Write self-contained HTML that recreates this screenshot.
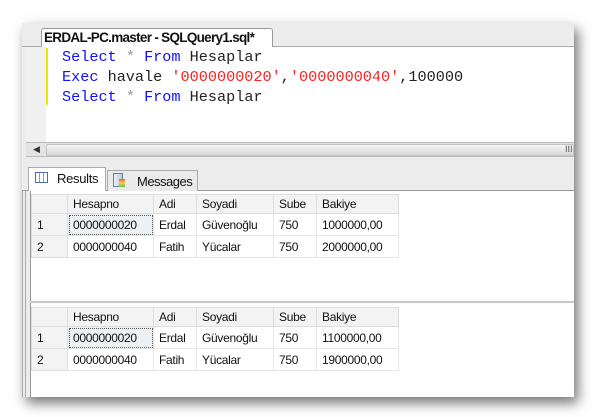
<!DOCTYPE html>
<html><head><meta charset="utf-8"><style>
*{margin:0;padding:0;box-sizing:border-box}
body{width:616px;height:417px;background:#fff;position:relative;overflow:hidden;font-family:"Liberation Sans",sans-serif}
.a{position:absolute;white-space:nowrap}
#win{left:22px;top:23px;width:552px;height:374px;background:#ececec;box-shadow:4px 6px 12px rgba(0,0,0,.55)}
.code{font-family:"Liberation Mono",monospace;font-size:15.2px;color:#222;white-space:pre;line-height:20px}
.k{color:#1010ff}.s{color:#ff2020}.g{color:#999}
table{border-collapse:collapse;font-size:12px;color:#111;letter-spacing:-0.3px}
td{height:22px;padding:0 5px;border:1px solid #e6e6e6;white-space:nowrap;background:#fff}
tr.h td{background:#f3f3f3;height:19px;border-color:#ddd}
td.r{background:#f3f3f3;border-color:#ddd}
td.sel{outline:1px dotted #555;outline-offset:-2px;background:#eef1f4}
</style></head><body>
<div id="win" class="a"></div>
<div class="a" style="left:22px;top:46px;width:552px;height:1px;background:#aaa"></div>
<div class="a" style="left:41px;top:28px;width:232px;height:19px;background:#fff;border:1px solid #999;border-bottom:none;border-radius:3px 3px 0 0;font-size:13.5px;font-weight:bold;padding-left:2px;line-height:18px;letter-spacing:-0.7px;color:#111;overflow:hidden">ERDAL-PC.master - SQLQuery1.sql*</div>
<div class="a" style="left:26px;top:47px;width:548px;height:95px;background:#fff"></div>
<div class="a" style="left:26px;top:47px;width:20px;height:95px;background:#f0f0f0"></div>
<div class="a" style="left:46px;top:48px;width:2px;height:57px;background:#f2e600"></div>
<div class="a code" style="left:62px;top:47px"><span class="k">Select</span> <span class="g">*</span> <span class="k">From</span> Hesaplar
<span class="k">Exec</span> havale <span class="s">'0000000020'</span>,<span class="s">'0000000040'</span>,100000
<span class="k">Select</span> <span class="g">*</span> <span class="k">From</span> Hesaplar</div>
<div class="a" style="left:26px;top:142px;width:548px;height:15px;background:#e4e4e4;border-top:1px solid #bbb;border-bottom:1px solid #bbb"></div>
<div class="a" style="left:46px;top:144px;width:528px;height:12px;background:linear-gradient(#f4f4f4,#d8d8d8);border:1px solid #c4c4c4;border-radius:2px"></div>
<div class="a" style="left:33px;top:144px;font-size:9px;color:#333">&#9664;</div>
<div class="a" style="left:565px;top:144px;font-size:9px;color:#555">III</div>
<div class="a" style="left:22px;top:190px;width:552px;height:1px;background:#999"></div>
<div class="a" style="left:28px;top:167px;width:78px;height:24px;background:#fff;border:1px solid #aaa;border-bottom:none"></div>
<div class="a" style="left:35px;top:172px;width:13px;height:11px;border:1px solid #4a6fa5;background:repeating-linear-gradient(90deg,#fff 0 3px,#7fa0c8 3px 4px),#fff"></div>
<div class="a" style="left:57px;top:171px;font-size:13px;color:#111;letter-spacing:-0.3px">Results</div>
<div class="a" style="left:107px;top:170px;width:91px;height:21px;background:#eaeaea;border:1px solid #aaa;border-bottom:none"></div>
<div class="a" style="left:113px;top:173px;width:10px;height:14px;border:1px solid #6a7fa0;background:linear-gradient(90deg,#e8eef8,#bcd)"></div>
<div class="a" style="left:119px;top:179px;width:6px;height:8px;background:linear-gradient(#f55,#fc4,#5c5)"></div>
<div class="a" style="left:137px;top:174px;font-size:13px;color:#111;letter-spacing:-0.5px">Messages</div>
<div class="a" style="left:30px;top:191px;width:544px;height:110px;background:#fff;border-left:1px solid #999"></div>
<div class="a" style="left:30px;top:301px;width:544px;height:2px;background:#c8c8c8"></div>
<div class="a" style="left:30px;top:303px;width:544px;height:94px;background:#fff;border-left:1px solid #999"></div>
<div class="a" style="left:22px;top:191px;width:1px;height:206px;background:#aaa"></div>
<div class="a" style="left:25px;top:191px;width:1px;height:206px;background:#aaa"></div>
<table class="a" style="left:31px;top:194px">
<tr class="h"><td style="width:36px"></td><td style="width:86px">Hesapno</td><td style="width:43px">Adi</td><td style="width:77px">Soyadi</td><td style="width:43px">Sube</td><td style="width:82px">Bakiye</td></tr>
<tr><td class="r">1</td><td class="sel">0000000020</td><td>Erdal</td><td>Güvenoğlu</td><td>750</td><td>1000000,00</td></tr>
<tr><td class="r">2</td><td>0000000040</td><td>Fatih</td><td>Yücalar</td><td>750</td><td>2000000,00</td></tr>
</table>
<table class="a" style="left:31px;top:307px">
<tr class="h"><td style="width:36px"></td><td style="width:86px">Hesapno</td><td style="width:43px">Adi</td><td style="width:77px">Soyadi</td><td style="width:43px">Sube</td><td style="width:82px">Bakiye</td></tr>
<tr><td class="r">1</td><td class="sel">0000000020</td><td>Erdal</td><td>Güvenoğlu</td><td>750</td><td>1100000,00</td></tr>
<tr><td class="r">2</td><td>0000000040</td><td>Fatih</td><td>Yücalar</td><td>750</td><td>1900000,00</td></tr>
</table>
</body></html>
